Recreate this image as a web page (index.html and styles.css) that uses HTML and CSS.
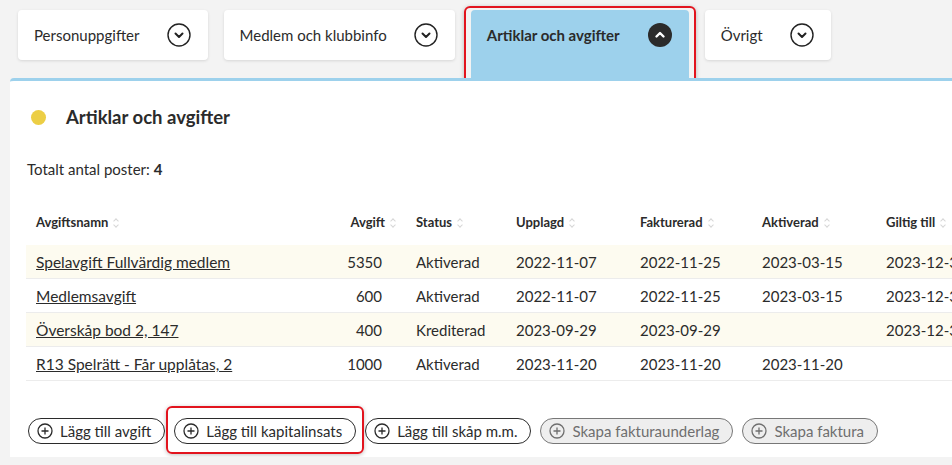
FILE: index.html
```html
<!DOCTYPE html>
<html>

<head>
	<meta charset="UTF-8">
	<link rel="stylesheet" href="styles.css">
</head>

<body>

	<div class="tabs">
		<div class="tab">
			<span>Personuppgifter</span>
			<svg class="chev" viewBox="0 0 24 24"><circle cx="12" cy="12" r="11" /><path d="M8.5 10.5 L12 14 L15.5 10.5" /></svg>
		</div>
		<div class="tab">
			<span>Medlem och klubbinfo</span>
			<svg class="chev" viewBox="0 0 24 24"><circle cx="12" cy="12" r="11" /><path d="M8.5 10.5 L12 14 L15.5 10.5" /></svg>
		</div>
		<div class="tab active marked">
			<span>Artiklar och avgifter</span>
			<svg class="chev" viewBox="0 0 24 24"><circle cx="12" cy="12" r="12" /><path d="M8.5 13.5 L12 10 L15.5 13.5" /></svg>
		</div>
		<div class="tab">
			<span>Övrigt</span>
			<svg class="chev" viewBox="0 0 24 24"><circle cx="12" cy="12" r="11" /><path d="M8.5 10.5 L12 14 L15.5 10.5" /></svg>
		</div>
	</div>

	<div class="panel">
		<div class="panel-head">
			<span class="dot"></span>
			<h2>Artiklar och avgifter</h2>
		</div>

		<p class="total">Totalt antal poster: <b>4</b></p>

		<table class="fees">
			<colgroup>
				<col style="width:310px">
				<col style="width:70px">
				<col style="width:100px">
				<col style="width:124px">
				<col style="width:122px">
				<col style="width:124px">
				<col style="width:124px">
			</colgroup>
			<thead>
				<tr>
					<th>Avgiftsnamn<i class="sort"></i></th>
					<th class="num">Avgift<i class="sort"></i></th>
					<th>Status<i class="sort"></i></th>
					<th>Upplagd<i class="sort"></i></th>
					<th>Fakturerad<i class="sort"></i></th>
					<th>Aktiverad<i class="sort"></i></th>
					<th>Giltig till<i class="sort"></i></th>
				</tr>
			</thead>
			<tbody>
				<tr>
					<td><a href="#">Spelavgift Fullvärdig medlem</a></td>
					<td class="num">5350</td>
					<td>Aktiverad</td>
					<td>2022-11-07</td>
					<td>2022-11-25</td>
					<td>2023-03-15</td>
					<td>2023-12-31</td>
				</tr>
				<tr>
					<td><a href="#">Medlemsavgift</a></td>
					<td class="num">600</td>
					<td>Aktiverad</td>
					<td>2022-11-07</td>
					<td>2022-11-25</td>
					<td>2023-03-15</td>
					<td>2023-12-31</td>
				</tr>
				<tr>
					<td><a href="#">Överskåp bod 2, 147</a></td>
					<td class="num">400</td>
					<td>Krediterad</td>
					<td>2023-09-29</td>
					<td>2023-09-29</td>
					<td></td>
					<td>2023-12-31</td>
				</tr>
				<tr>
					<td><a href="#">R13 Spelrätt - Får upplåtas, 2</a></td>
					<td class="num">1000</td>
					<td>Aktiverad</td>
					<td>2023-11-20</td>
					<td>2023-11-20</td>
					<td>2023-11-20</td>
					<td></td>
				</tr>
			</tbody>
		</table>

		<div class="actions">
			<button class="btn"><svg viewBox="0 0 16 16"><circle cx="8" cy="8" r="7" /><path d="M8 4.5 V11.5 M4.5 8 H11.5" /></svg>Lägg till avgift</button>
			<button class="btn marked"><svg viewBox="0 0 16 16"><circle cx="8" cy="8" r="7" /><path d="M8 4.5 V11.5 M4.5 8 H11.5" /></svg>Lägg till kapitalinsats</button>
			<button class="btn"><svg viewBox="0 0 16 16"><circle cx="8" cy="8" r="7" /><path d="M8 4.5 V11.5 M4.5 8 H11.5" /></svg>Lägg till skåp m.m.</button>
			<button class="btn" disabled><svg viewBox="0 0 16 16"><circle cx="8" cy="8" r="7" /><path d="M8 4.5 V11.5 M4.5 8 H11.5" /></svg>Skapa fakturaunderlag</button>
			<button class="btn" disabled><svg viewBox="0 0 16 16"><circle cx="8" cy="8" r="7" /><path d="M8 4.5 V11.5 M4.5 8 H11.5" /></svg>Skapa faktura</button>
		</div>
	</div>

</body>

</html>
```

FILE: styles.css
```css
body {
	margin: 0;
	background: #f3f3f3;
	font-family: Lato, "Open Sans", sans-serif;
	color: #2b2b2b;
	overflow: hidden;
}

.tabs {
	display: flex;
	gap: 16px;
	padding: 10px 18px 0;
	align-items: flex-start;
}

.tab {
	position: relative;
	height: 50px;
	display: flex;
	align-items: center;
	gap: 27px;
	padding: 0 17px 0 16px;
	background: #fff;
	border-radius: 4px;
	box-shadow: 0 1px 3px rgba(0, 0, 0, 0.12);
	font-size: 15px;
}

.tab .chev {
	width: 24px;
	height: 24px;
	margin-left: auto;
	fill: none;
	stroke: #222;
	stroke-width: 1.4;
}

.tab .chev path {
	stroke-width: 2;
	stroke-linecap: round;
	stroke-linejoin: round;
}

.tab.active {
	height: 70px;
	padding-bottom: 20px;
	box-sizing: border-box;
	background: #9dd1ec;
	font-weight: bold;
	border-radius: 4px 4px 0 0;
	gap: 28px;
	box-shadow: none;
}

.tab.active .chev circle {
	fill: #2b2b2b;
	stroke: none;
}

.tab.active .chev path {
	stroke: #fff;
	stroke-width: 2.4;
}

.marked::after {
	content: "";
	position: absolute;
	border: 2px solid #e2141e;
	border-radius: 6px;
	box-shadow: 0 1px 4px rgba(0, 0, 0, 0.25);
	pointer-events: none;
}

.tab.marked::after {
	left: -7px;
	right: -7px;
	top: -4px;
	bottom: -7px;
}

.panel {
	margin: -2px 0 0 10px;
	background: #fff;
	border-top: 3px solid #9dd1ec;
	border-radius: 4px 0 0 0;
	padding: 0 0 13px 16px;
	overflow: hidden;
	position: relative;
}

.panel-head {
	display: flex;
	align-items: center;
	height: 72px;
}

.dot {
	width: 15px;
	height: 15px;
	border-radius: 50%;
	background: #ecce45;
	margin-left: 5px;
	margin-right: 20px;
}

.panel-head h2 {
	margin: 0;
	font-size: 18.5px;
}

.total {
	margin: 7px 0 0 1px;
	font-size: 15px;
}

.fees {
	margin-top: 24px;
	border-collapse: collapse;
	table-layout: fixed;
	width: 974px;
	font-size: 15px;
}

.fees th {
	text-align: left;
	font-size: 13px;
	height: 43px;
	padding: 0 10px 3px;
	box-sizing: border-box;
	white-space: nowrap;
}

.fees td {
	height: 33px;
	padding: 0 10px;
	border-bottom: 1px solid #ececec;
	white-space: nowrap;
}

.fees tbody tr:nth-child(odd) {
	background: #fdfbf0;
}

.fees .num {
	text-align: right;
	padding-right: 24px;
}

.fees th.num .sort {
	margin-right: -14px;
}

.fees a {
	color: #2b2b2b;
	font-size: 15.5px;
}

.sort {
	display: inline-block;
	width: 6px;
	height: 10px;
	margin-left: 5px;
	vertical-align: -1px;
	position: relative;
}

.sort::before,
.sort::after {
	content: "";
	position: absolute;
	left: 1px;
	width: 3px;
	height: 3px;
	border-left: 1px solid #d6d6d6;
	border-top: 1px solid #d6d6d6;
}

.sort::before {
	top: 1px;
	transform: rotate(45deg);
}

.sort::after {
	bottom: 1px;
	transform: rotate(225deg);
}

.actions {
	display: flex;
	gap: 9px;
	margin-top: 37px;
	padding-left: 2px;
}

.btn {
	position: relative;
	display: flex;
	align-items: center;
	gap: 7px;
	height: 26px;
	padding: 0 13px 0 8px;
	border: 1px solid #2b2b2b;
	border-radius: 13px;
	background: #fff;
	font: 15px Lato, "Open Sans", sans-serif;
	color: #2b2b2b;
}

.btn svg {
	width: 16px;
	height: 16px;
	fill: none;
	stroke: #2b2b2b;
	stroke-width: 1.3;
}

.btn:disabled {
	background: #eeeeee;
	border-color: #777;
	color: #6f6f6f;
}

.btn:disabled svg {
	stroke: #6f6f6f;
}

.btn.marked::after {
	left: -9px;
	right: -9px;
	top: -13px;
	bottom: -11px;
}
```
